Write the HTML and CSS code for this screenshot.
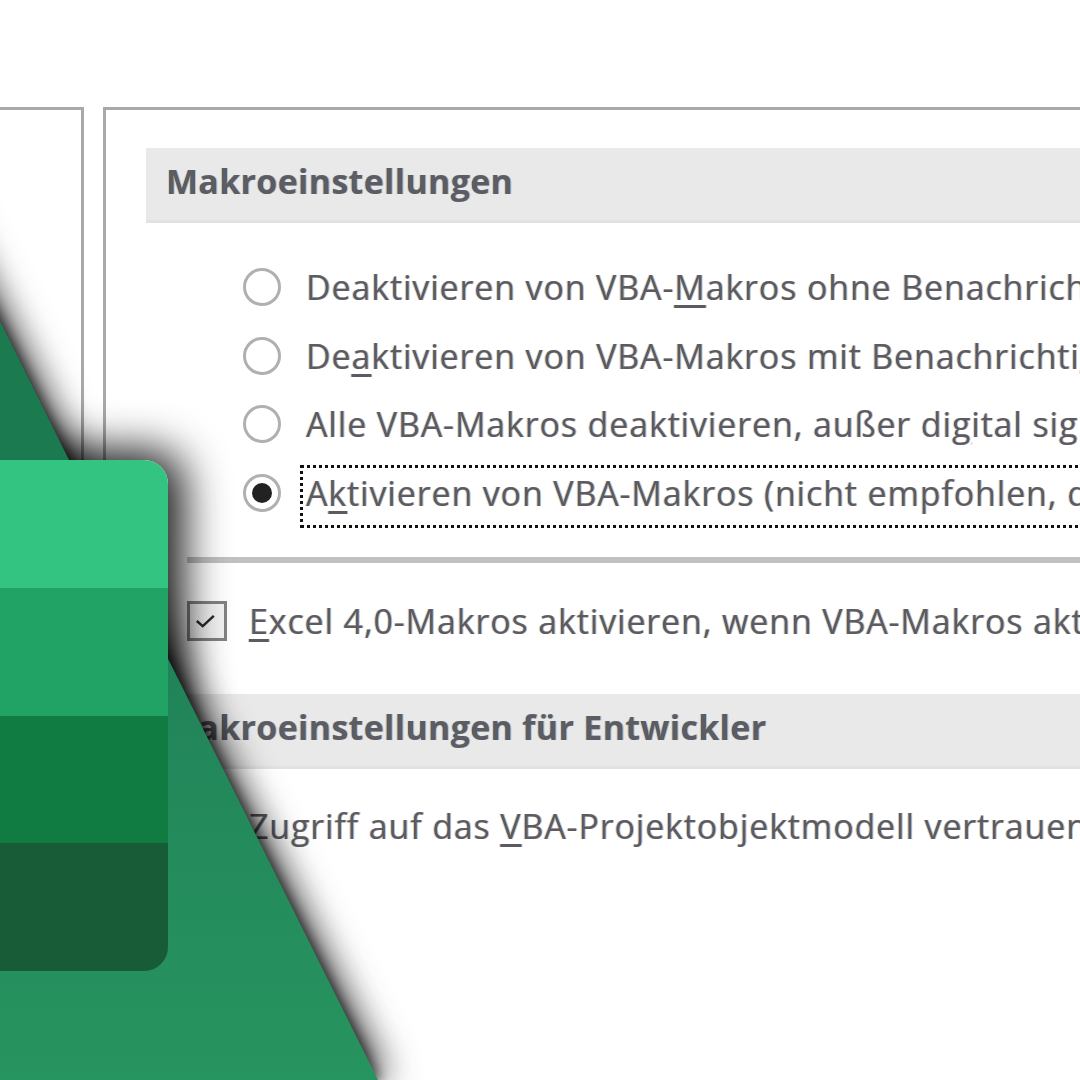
FILE: index.html
```html
<!DOCTYPE html>
<html lang="de">

<head>
    <meta charset="UTF-8">
    <meta name="viewport" content="width=device-width, initial-scale=1.0">
    <title>Makroeinstellungen</title>
    <link rel="stylesheet" href="styles.css">
</head>

<body>

    <div class="dialog">
        <div class="side-panel"></div>

        <div class="main-panel">
            <h2 class="section-title">Makroeinstellungen</h2>

            <div class="radio-list">
                <div class="radio-row">
                    <span class="radio"></span>
                    <span class="label">Deaktivieren von VBA-<u>M</u>akros ohne Benachrichtigung</span>
                </div>
                <div class="radio-row">
                    <span class="radio"></span>
                    <span class="label">De<u>a</u>ktivieren von VBA-Makros mit Benachrichtigung</span>
                </div>
                <div class="radio-row">
                    <span class="radio"></span>
                    <span class="label">Alle VBA-Makros deaktivieren, außer di<u>g</u>ital signierte Makros</span>
                </div>
                <div class="radio-row">
                    <span class="radio radio-on"></span>
                    <span class="label label-focus">A<u>k</u>tivieren von VBA-Makros (nicht empfohlen, da potenziell gefährlicher Code ausgeführt werden kann)</span>
                </div>
            </div>

            <div class="divider"></div>

            <div class="check-row">
                <span class="checkbox">
                    <svg viewBox="0 0 40 40" width="34" height="34">
                        <path d="M8 20 L15 26 L28 14" fill="none" stroke="#2b2b2b" stroke-width="3"/>
                    </svg>
                </span>
                <span class="label"><u>E</u>xcel 4,0-Makros aktivieren, wenn VBA-Makros aktiviert sind</span>
            </div>

            <h2 class="section-title section-title-dev">Makroeinstellungen für Entwickler</h2>

            <div class="check-row check-row-dev">
                <span class="checkbox"></span>
                <span class="label">Zugriff auf das <u>V</u>BA-Projektobjektmodell vertrauen</span>
            </div>
        </div>
    </div>

    <!-- logo lies over the dialog -->
    <div class="logo-shadow"></div>
    <div class="logo-back"></div>
    <div class="logo-front">
        <div class="band band-1"></div>
        <div class="band band-2"></div>
        <div class="band band-3"></div>
        <div class="band band-4"></div>
    </div>

</body>

</html>
```

FILE: styles.css
```css
* {
    margin: 0;
    padding: 0;
    box-sizing: border-box;
    font-family: "Open Sans", "Noto Sans", sans-serif;
}

html,
body {
    width: 1080px;
    height: 1080px;
    overflow: hidden;
    background-color: white;
}

body {
    position: relative;
}

.dialog {
    display: flex;
    gap: 19px;
    height: 1080px;
    padding-top: 107px;
    filter: blur(0.7px);
}

.side-panel {
    width: 84px;
    border-top: 3px solid #a9a9a9;
    border-right: 3px solid #a9a9a9;
}

.main-panel {
    flex: 1;
    min-width: 0;
    overflow: hidden;
    padding: 38px 0 0 40px;
    border-top: 3px solid #a9a9a9;
    border-left: 3px solid #a9a9a9;
}

.section-title {
    height: 75px;
    padding-left: 20px;
    background-color: #e9e9e9;
    border-bottom: 3px solid #e2e2e2;
    color: #5c5c64;
    font-size: 34px;
    font-weight: 700;
    letter-spacing: 0.3px;
    line-height: 66px;
    white-space: nowrap;
    text-shadow: -1px 0 rgba(225, 185, 120, 0.6), 1px 0 rgba(110, 170, 225, 0.6);
}

.section-title-dev {
    margin-top: 53px;
}

.radio-list {
    display: flex;
    flex-direction: column;
    gap: 30.5px;
    margin-top: 45px;
    padding-left: 97px;
}

.radio-row {
    display: flex;
    align-items: center;
    gap: 25px;
    height: 38px;
}

.radio {
    flex: none;
    width: 38px;
    height: 38px;
    border: 3px solid #b0b0b0;
    border-radius: 50%;
    display: flex;
    align-items: center;
    justify-content: center;
}

.radio-on::after {
    content: "";
    width: 20px;
    height: 20px;
    border-radius: 50%;
    background-color: #222;
}

.label {
    color: #5d5a62;
    font-size: 34px;
    letter-spacing: 0.85px;
    line-height: 38px;
    white-space: nowrap;
    text-shadow: -1px 0 rgba(225, 185, 120, 0.65), 1px 0 rgba(110, 170, 225, 0.65);
}

.label u {
    text-decoration-thickness: 3px;
    text-underline-offset: 5px;
}

.label-focus {
    position: relative;
}

/* dotted focus box sits round the label */
.label-focus::before {
    content: "";
    position: absolute;
    left: -6px;
    top: -9px;
    width: 1200px;
    height: 57px;
    border: 3px dotted #111;
}

.divider {
    height: 6px;
    margin: 45px 0 0 41px;
    background-color: #c1c1c1;
}

.check-row {
    display: flex;
    align-items: center;
    gap: 22px;
    height: 40px;
    margin: 38px 0 0 41px;
}

.check-row-dev {
    margin-top: 37px;
}

.checkbox {
    flex: none;
    width: 40px;
    height: 40px;
    border: 3px solid #838383;
    background-color: #f4f4f4;
    display: flex;
    align-items: center;
    justify-content: center;
}

.logo-back {
    position: absolute;
    left: -200px;
    top: -80px;
    width: 600px;
    height: 1200px;
    filter: drop-shadow(3px 0 6px rgba(0, 0, 0, 0.55)) drop-shadow(6px 0 18px rgba(0, 0, 0, 0.85));
}

.logo-back::before {
    content: "";
    position: absolute;
    inset: 0;
    clip-path: polygon(0 0, 578px 1160px, 0 1200px);
    background: linear-gradient(180deg, #1c7a50 50%, #22855a 65%, #27965f 100%);
}

.logo-shadow {
    position: absolute;
    left: -40px;
    top: 460px;
    width: 208px;
    height: 511px;
    border-radius: 24px;
    box-shadow: 6px 0 44px 10px rgba(0, 0, 0, 0.9);
}

.logo-front {
    position: absolute;
    left: -40px;
    top: 460px;
    width: 208px;
    height: 511px;
    border-radius: 24px;
    overflow: hidden;
    display: flex;
    flex-direction: column;
}

.band {
    flex: 1;
}

.band-1 {
    background-color: #33c481;
}

.band-2 {
    background-color: #21a366;
}

.band-3 {
    background-color: #107c41;
}

.band-4 {
    background-color: #185c37;
}
```
